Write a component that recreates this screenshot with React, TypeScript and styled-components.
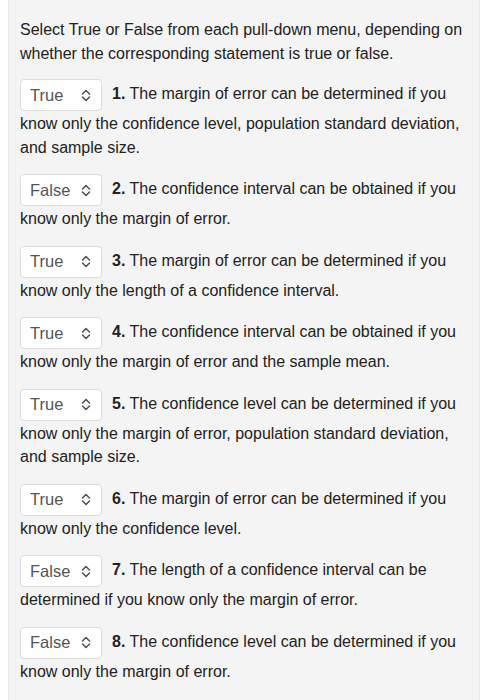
import React from "react";
import styled, { createGlobalStyle } from "styled-components";

const Global = createGlobalStyle`
  html, body { margin: 0; padding: 0; background: #ffffff; }
  body { font-family: "Liberation Sans", Arial, Helvetica, sans-serif; }
`;

const Panel = styled.div`
  margin: 0 8px;
  width: 472px;
  box-sizing: border-box;
  min-height: 700px;
  background: #f4f4f4;
  border-left: 1px solid #ebebeb;
  border-right: 1px solid #ebebeb;
  padding: 18px 12px 12px 11px;
  color: #222;
  font-size: 16px;
  line-height: 23.5px;
`;

const Intro = styled.p`
  margin: 0 0 13px 0;
`;

const Item = styled.p`
  margin: 0 0 14px 0;
`;

const SelectBox = styled.span`
  display: inline-flex;
  align-items: center;
  justify-content: space-between;
  box-sizing: border-box;
  width: 82px;
  height: 32px;
  margin: 1px 10px 1px 0;
  padding: 0 10px 0 9px;
  vertical-align: middle;
  background: #ffffff;
  border: 1px solid #dcdcdc;
  border-radius: 4px;
  color: #555;
  font-size: 16.5px;
  line-height: 1;
`;

const Num = styled.b`
  font-weight: 700;
`;

const Chevron = () => (
  <svg width="10" height="13" viewBox="0 0 10 13" fill="none">
    <path d="M1.5 5 L5 1.5 L8.5 5" stroke="#555" strokeWidth="1.6" strokeLinecap="round" strokeLinejoin="round" />
    <path d="M1.5 8 L5 11.5 L8.5 8" stroke="#555" strokeWidth="1.6" strokeLinecap="round" strokeLinejoin="round" />
  </svg>
);

const items: { v: string; t: string }[] = [
  { v: "True", t: "The margin of error can be determined if you know only the confidence level, population standard deviation, and sample size." },
  { v: "False", t: "The confidence interval can be obtained if you know only the margin of error." },
  { v: "True", t: "The margin of error can be determined if you know only the length of a confidence interval." },
  { v: "True", t: "The confidence interval can be obtained if you know only the margin of error and the sample mean." },
  { v: "True", t: "The confidence level can be determined if you know only the margin of error, population standard deviation, and sample size." },
  { v: "True", t: "The margin of error can be determined if you know only the confidence level." },
  { v: "False", t: "The length of a confidence interval can be determined if you know only the margin of error." },
  { v: "False", t: "The confidence level can be determined if you know only the margin of error." },
];

export default function App() {
  return (
    <>
      <Global />
      <Panel>
        <Intro>
          Select True or False from each pull-down menu, depending on whether the corresponding statement is true or false.
        </Intro>
        {items.map((it, i) => (
          <Item key={i}>
            <SelectBox>
              <span>{it.v}</span>
              <Chevron />
            </SelectBox>
            <Num>{i + 1}.</Num> {it.t}
          </Item>
        ))}
      </Panel>
    </>
  );
}
